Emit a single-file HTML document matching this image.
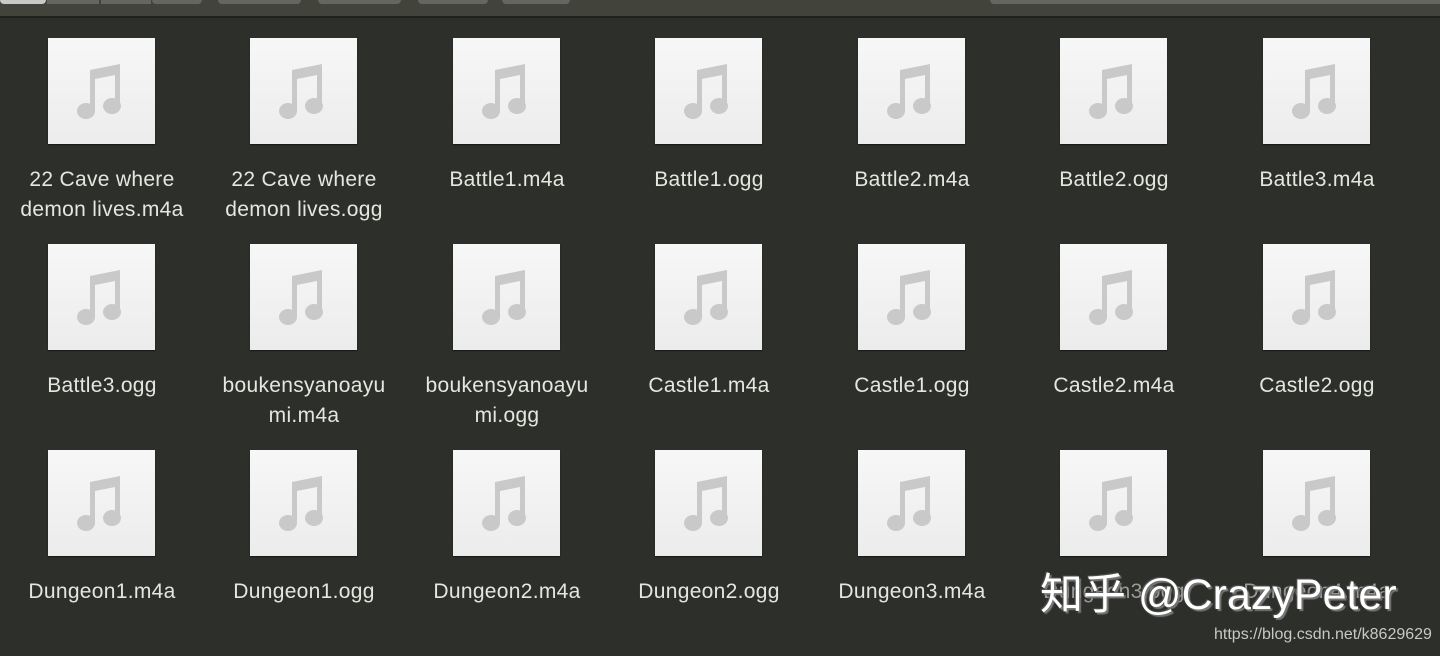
<!DOCTYPE html>
<html><head><meta charset="utf-8"><style>
html,body{margin:0;padding:0}
body{width:1440px;height:656px;overflow:hidden;background:#2d2f2a;position:relative;font-family:"Liberation Sans","Noto Sans CJK SC",sans-serif}
.bar{position:absolute;left:0;top:0;width:1440px;height:16px;background:#42443c;border-bottom:2px solid #1f211d}
.btn{position:absolute;top:0;height:4px;background:#65665f;border-radius:0 0 5px 5px}
.tile{position:absolute;width:107px;height:106px;background:linear-gradient(#f7f7f7,#ececec);box-shadow:0 1px 1px rgba(0,0,0,.5)}
.tile svg{position:absolute;left:0;top:0}
.lbl{position:absolute;width:200px;text-align:center;color:#e6e6e1;font-size:21px;letter-spacing:0.3px;line-height:30px}
.dim{color:#9a9a96}
.wm{position:absolute;left:1040px;top:560px;font-size:43px;color:#fff;text-shadow:2px 2px 1px #777,-1px -1px 1px #555;white-space:nowrap}
.url{position:absolute;left:1214px;top:626px;font-size:16px;color:#c8c8c4}
</style></head><body>
<div class="bar">
<div class="btn" style="left:0;width:46px;background:#c9c9c6"></div>
<div class="btn" style="left:47px;width:52px;border-radius:0"></div>
<div class="btn" style="left:101px;width:50px;border-radius:0"></div>
<div class="btn" style="left:152px;width:50px"></div>
<div class="btn" style="left:218px;width:83px"></div>
<div class="btn" style="left:318px;width:83px"></div>
<div class="btn" style="left:418px;width:70px"></div>
<div class="btn" style="left:502px;width:68px"></div>
<div class="btn" style="left:990px;width:450px;border-radius:0 0 0 8px"></div>
</div>
<svg width="0" height="0" style="position:absolute"><defs><g id="n" fill="#c9c9c9">
<rect x="42" y="34" width="5" height="40"/><rect x="67" y="27" width="5" height="42"/>
<polygon points="42,32 72,26 72,36 42,42"/>
<ellipse cx="38" cy="73" rx="9" ry="8"/><ellipse cx="64" cy="68" rx="9" ry="8"/></g></defs></svg>
<div id="g"></div>
<script>
var xs=[48,250,453,655,858,1060,1263],ys=[38,244,450];
var names=[["22 Cave where<br>demon lives.m4a","22 Cave where<br>demon lives.ogg","Battle1.m4a","Battle1.ogg","Battle2.m4a","Battle2.ogg","Battle3.m4a"],
["Battle3.ogg","boukensyanoayu<br>mi.m4a","boukensyanoayu<br>mi.ogg","Castle1.m4a","Castle1.ogg","Castle2.m4a","Castle2.ogg"],
["Dungeon1.m4a","Dungeon1.ogg","Dungeon2.m4a","Dungeon2.ogg","Dungeon3.m4a","Dungeon3.ogg","Dungeon4.m4a"]];
var h="";
for(var r=0;r<3;r++)for(var c=0;c<7;c++){
h+='<div class="tile" style="left:'+xs[c]+'px;top:'+ys[r]+'px"><svg width="107" height="106"><use href="#n"/></svg></div>';
h+='<div class="lbl'+(r==2&&c>4?' dim':'')+'" style="left:'+(xs[c]-46)+'px;top:'+(ys[r]+127)+'px">'+names[r][c]+'</div>';}
document.getElementById("g").innerHTML=h;
</script>
<div class="wm">知乎 @CrazyPeter</div>
<div class="url">https://blog.csdn.net/k8629629</div>
</body></html>
